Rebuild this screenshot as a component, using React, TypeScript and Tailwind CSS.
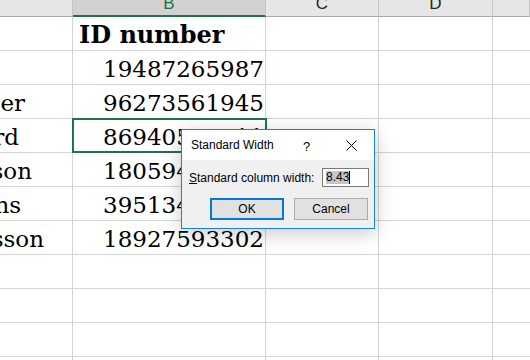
import React from "react";

const rows = [
  { a: "", b: "ID number", head: true },
  { a: "", b: "19487265987" },
  { a: "Berger", b: "96273561945", pr: "pr-[47px]" },
  { a: "Richard", b: "86940537211", pr: "pr-[53px]", selected: true },
  { a: "Olsson", b: "18059462731", pr: "pr-[40px]" },
  { a: "Jenkins", b: "39513482016", pr: "pr-[51px]" },
  { a: "Andersson", b: "18927593302", pr: "pr-[28px]" },
  { a: "", b: "" },
  { a: "", b: "" },
  { a: "", b: "" },
  { a: "", b: "" },
];

const serif = "font-['DejaVu_Serif',Georgia,serif]";

function HeaderCell({ label, w, active }: { label: string; w: string; active?: boolean }) {
  return (
    <div
      className={`${w} h-[17px] shrink-0 overflow-hidden flex justify-center border-r border-[#c6c6c6] ${
        active ? "bg-[#d2d2d2] border-b-2 border-b-[#217346] text-[#217346]" : "bg-[#e6e6e6] border-b border-b-[#ababab] text-[#262626]"
      }`}
    >
      <span className="text-[17px] leading-none mt-[-5px] font-['Liberation_Sans',sans-serif]">{label}</span>
    </div>
  );
}

export default function App() {
  return (
    <div className="relative w-[530px] h-[360px] overflow-hidden bg-white">
      <div className="flex">
        <HeaderCell label="" w="w-[73px]" />
        <HeaderCell label="B" w="w-[193px]" active />
        <HeaderCell label="C" w="w-[113px]" />
        <HeaderCell label="D" w="w-[114px]" />
        <HeaderCell label="" w="w-[37px]" />
      </div>

      {rows.map((r, i) => (
        <div key={i} className={`flex h-[34px] ${serif} text-[23px] text-black`}>
          <div className={`w-[73px] shrink-0 overflow-hidden flex items-end justify-end pb-[3px] border-r border-b border-[#d4d4d4] whitespace-nowrap ${r.pr ?? ""}`}>
            <span className="leading-none">{r.a}</span>
          </div>
          <div
            className={`relative w-[193px] shrink-0 flex items-end pb-[3px] border-r border-b border-[#d4d4d4] whitespace-nowrap ${
              r.head ? "justify-start pl-[6px] font-bold text-[24px]" : "justify-end pr-[1px]"
            }`}
          >
            <span className="leading-none">{r.b}</span>
            {r.selected && (
              <div className="absolute left-[-1px] top-[-1px] right-[-2px] bottom-[-1px] border-2 border-[#217346]" />
            )}
          </div>
          <div className="w-[113px] shrink-0 border-r border-b border-[#d4d4d4]" />
          <div className="w-[114px] shrink-0 border-r border-b border-[#d4d4d4]" />
          <div className="w-[37px] shrink-0 border-b border-[#d4d4d4]" />
        </div>
      ))}

      {/* Standard Width dialog */}
      <div className="absolute left-[181px] top-[129px] w-[194px] h-[100px] border border-[#1883d7] bg-[#f0f0f0] shadow-[0_4px_18px_rgba(0,0,0,0.22)] flex flex-col font-['Liberation_Sans',Arial,sans-serif] text-[12px] text-black">
        <div className="h-[30px] bg-white flex items-center pl-[9px] relative">
          <span>Standard Width</span>
          <span className="absolute left-[121px] top-[7px] text-[13px]">?</span>
          <svg className="absolute left-[164px] top-[10px]" width="11" height="11" viewBox="0 0 11 11">
            <path d="M0.5 0.5 L10.5 10.5 M10.5 0.5 L0.5 10.5" stroke="#000" strokeWidth="1" />
          </svg>
        </div>
        <div className="flex items-center mt-[8px] h-[19px]">
          <span className="pl-[7px] w-[140px]">
            <span className="underline">S</span>tandard column width:
          </span>
          <div className="w-[47px] h-[19px] bg-white border border-[#7a7a7a] flex items-center pl-[3px]">
            <span className="bg-[#c7c7c7] leading-[13px]">8.43</span>
            <span className="w-px h-[13px] bg-black" />
          </div>
        </div>
        <div className="flex mt-[11px] pl-[28px] gap-[10px]">
          <button className="w-[74px] h-[22px] bg-[#e1e1e1] border-2 border-[#0078d7] text-[12px]">OK</button>
          <button className="w-[74px] h-[22px] bg-[#e1e1e1] border border-[#adadad] text-[12px]">Cancel</button>
        </div>
      </div>
    </div>
  );
}
